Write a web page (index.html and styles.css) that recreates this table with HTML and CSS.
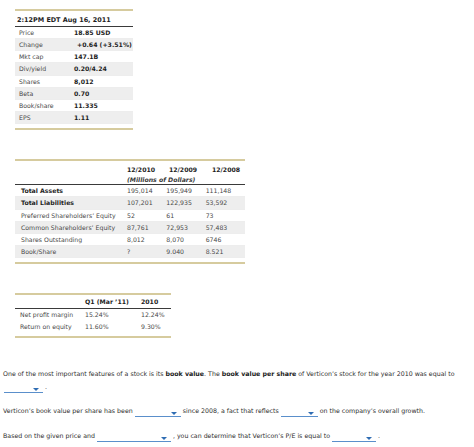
FILE: index.html
```html
<!DOCTYPE html>
<html lang="en">
<head>
<meta charset="utf-8">
<title>Verticon</title>
<link rel="stylesheet" href="styles.css">
</head>
<body>
<div class="page">
  <div class="fin-box quote">
    <table class="fin">
      <thead>
        <tr class="head"><th colspan="2" class="title">2:12PM EDT Aug 16, 2011</th></tr>
      </thead>
      <tbody>
        <tr><td class="lbl">Price</td><td class="val">18.85 USD</td></tr>
        <tr class="alt"><td class="lbl">Change</td><td class="val ind">+0.64 (+3.51%)</td></tr>
        <tr><td class="lbl">Mkt cap</td><td class="val">147.1B</td></tr>
        <tr class="alt"><td class="lbl">Div/yield</td><td class="val">0.20/4.24</td></tr>
        <tr><td class="lbl">Shares</td><td class="val">8,012</td></tr>
        <tr class="alt"><td class="lbl">Beta</td><td class="val">0.70</td></tr>
        <tr><td class="lbl">Book/share</td><td class="val">11.335</td></tr>
        <tr class="alt"><td class="lbl">EPS</td><td class="val">1.11</td></tr>
      </tbody>
    </table>
  </div>

  <div class="fin-box balance">
    <table class="fin">
      <thead>
        <tr class="head">
          <th class="lbl"></th>
          <th class="yr" colspan="3">
            <div class="years"><span>12/2010</span><span>12/2009</span><span>12/2008</span></div>
            <div class="unit">(Millions of Dollars)</div>
          </th>
        </tr>
      </thead>
      <tbody>
        <tr><td class="lbl strong">Total Assets</td><td>195,014</td><td>195,949</td><td>111,148</td></tr>
        <tr class="alt"><td class="lbl strong">Total Liabilities</td><td>107,201</td><td>122,935</td><td>53,592</td></tr>
        <tr><td class="lbl">Preferred Shareholders’ Equity</td><td>52</td><td>61</td><td>73</td></tr>
        <tr class="alt"><td class="lbl">Common Shareholders’ Equity</td><td>87,761</td><td>72,953</td><td>57,483</td></tr>
        <tr><td class="lbl">Shares Outstanding</td><td>8,012</td><td>8,070</td><td>6746</td></tr>
        <tr class="alt"><td class="lbl">Book/Share</td><td>?</td><td>9.040</td><td>8.521</td></tr>
      </tbody>
    </table>
  </div>

  <div class="fin-box ratios">
    <table class="fin">
      <thead>
        <tr class="head"><th class="lbl"></th><th>Q1 (Mar ’11)</th><th>2010</th></tr>
      </thead>
      <tbody>
        <tr><td class="lbl">Net profit margin</td><td>15.24%</td><td>12.24%</td></tr>
        <tr><td class="lbl">Return on equity</td><td>11.60%</td><td>9.30%</td></tr>
      </tbody>
    </table>
  </div>

  <div class="questions">
    <p>One of the most important features of a stock is its <b>book value</b>. The <b>book value per share</b> of Verticon’s stock for the year 2010 was equal to <span class="dd w1"><i class="arrow"></i></span> .</p>
    <p>Verticon’s book value per share has been <span class="dd w2"><i class="arrow"></i></span> since 2008, a fact that reflects <span class="dd w3"><i class="arrow"></i></span> on the company’s overall growth.</p>
    <p>Based on the given price and <span class="dd w4"><i class="arrow"></i></span> , you can determine that Verticon’s P/E is equal to <span class="dd w5"><i class="arrow"></i></span> .</p>
  </div>
</div>
</body>
</html>
```

FILE: styles.css
```css
html, body {
  margin: 0;
  padding: 0;
  background: #ffffff;
}

.page {
  font-family: "DejaVu Sans", Verdana, sans-serif;
  color: #333333;
  padding-top: 9px;
}

.fin-box {
  margin-left: 15px;
  border-top: 2px solid #d6cb9e;
  border-bottom: 2px solid #d6cb9e;
  padding-bottom: 4px;
}

.quote { width: 118px; }
.balance { width: 230px; margin-top: 29px; }
.ratios { width: 156px; margin-top: 29px; padding-bottom: 3px; }

.fin {
  width: 100%;
  border-collapse: collapse;
  table-layout: fixed;
  font-size: 6.2px;
}

.fin th,
.fin td {
  padding: 0;
  text-align: left;
  white-space: nowrap;
}

.fin td {
  line-height: 11.15px;
  border-bottom: 1px solid #ededed;
  color: #484848;
}

.fin tr.alt td {
  background: #eeeeee;
}

.fin tr.head th {
  border-bottom: 1px solid #3a3a3a;
  color: #1e1e1e;
  font-weight: bold;
}

/* quote table */
.quote .fin tr.head th.title {
  font-size: 6.45px;
  line-height: 12px;
  padding: 3px 0 0 2px;
}
.quote .lbl { width: 47px; padding-left: 4px; }
.quote .val { font-weight: bold; color: #1e1e1e; }
.quote .ind { padding-left: 3px; }

/* balance table */
.balance .fin td { line-height: 11.2px; }
.balance .lbl { width: 106px; padding-left: 6px; }
.balance td:nth-child(2) { width: 42px; }
.balance td:nth-child(3) { width: 43px; }
.balance .strong { font-weight: bold; color: #1e1e1e; }
.balance .fin tr.head th.yr { padding-top: 3px; }
.years {
  display: flex;
  line-height: 11px;
}
.years span:nth-child(1) { width: 42px; }
.years span:nth-child(2) { width: 43px; }
.unit {
  font-style: italic;
  color: #3a3a3a;
  line-height: 9px;
}

/* ratios table */
.ratios .lbl { width: 65px; padding-left: 5px; }
.ratios .fin tr.head th { line-height: 13px; }
.ratios .fin th:nth-child(2) { width: 56px; }
.ratios .fin td { border-bottom: none; line-height: 12px; }

/* questions */
.questions {
  margin-top: 30px;
  padding-left: 3px;
  font-size: 6.27px;
  line-height: 12.5px;
  color: #2e2e2e;
}
.questions p {
  margin: 0 0 12px 0;
}
.questions b { color: #1a1a1a; }

.dd {
  display: inline-flex;
  justify-content: flex-end;
  align-items: flex-end;
  height: 7px;
  border-bottom: 1px solid #5a8fcb;
  vertical-align: -2px;
  padding: 0 4px 1px 0;
  box-sizing: border-box;
}
.w1 { width: 39px; margin-left: 1px; }
.w2 { width: 46px; }
.w3 { width: 37px; }
.w4 { width: 74px; }
.w5 { width: 44px; }

.arrow {
  width: 0;
  height: 0;
  border-left: 3px solid transparent;
  border-right: 3px solid transparent;
  border-top: 3px solid #2f6db3;
}
```
